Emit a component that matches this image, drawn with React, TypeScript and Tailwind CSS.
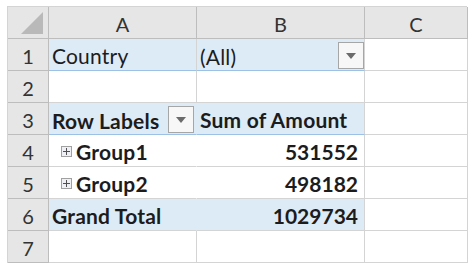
import React from 'react';

const font = { fontFamily: 'Lato, "Open Sans", sans-serif' };

const Dropdown: React.FC = () => (
  <div className="w-[26px] h-[27px] border border-[#a6a6a6] bg-[#f7f7f7] flex items-center justify-center shrink-0">
    <div className="w-0 h-0 border-l-[5px] border-r-[5px] border-t-[6px] border-l-transparent border-r-transparent border-t-[#6b6b6b]" />
  </div>
);

const Plus: React.FC = () => (
  <div className="w-[11px] h-[11px] border border-[#a0a0a0] bg-[#eef0f5] flex items-center justify-center mr-[4px] relative shrink-0">
    <div className="absolute w-[7px] h-px bg-[#505050]" />
    <div className="absolute w-px h-[7px] bg-[#505050]" />
  </div>
);

const cell = 'h-[32px] border-r border-b border-[#d4d4d4] flex items-center text-[21px] tracking-[0.2px] text-[#1c1c1c] pt-[2px]';
const num = 'text-[20px] tracking-normal';
const head = 'h-[32px] border-r border-b border-[#bdbdbd] bg-[#e6e6e6] flex items-center justify-center text-[20px] text-[#333] pt-[2px]';
const blue = 'bg-[#ddebf7]';

export default function App() {
  const rowHead = (n: number) => (
    <div className={`${head} text-[#222]`}>{n}</div>
  );

  return (
    <div className="w-[474px] h-[268px] bg-white pt-[6px] pl-[7px]" style={font}>
      <div className="grid grid-cols-[41px_148px_168px_103px] border-t border-l border-[#d4d4d4] w-[460px]">
        {/* header row */}
        <div className={`${head} items-end justify-end pr-[5px] pb-[4px] pt-0`}>
          <div className="w-[22px] h-[22px] bg-[#b9b9b9] [clip-path:polygon(100%_0,100%_100%,0_100%)]" />
        </div>
        <div className={head}>A</div>
        <div className={head}>B</div>
        <div className={head}>C</div>

        {/* row 1 */}
        {rowHead(1)}
        <div className={`${cell} ${blue} border-b-[#9bc2e6] pl-[3px]`}>Country</div>
        <div className={`${cell} ${blue} border-b-[#9bc2e6] pl-[3px] justify-between pr-0 pt-0`}>
          <span className="pt-[2px]">(All)</span>
          <Dropdown />
        </div>
        <div className={cell} />

        {/* row 2 */}
        {rowHead(2)}
        <div className={cell} />
        <div className={cell} />
        <div className={cell} />

        {/* row 3 */}
        {rowHead(3)}
        <div className={`${cell} ${blue} border-r-transparent border-b-[#9bc2e6] pl-[3px] pr-[2px] justify-between font-bold pt-0`}>
          <span className="pt-[2px]">Row Labels</span>
          <Dropdown />
        </div>
        <div className={`${cell} ${blue} border-b-[#9bc2e6] pl-[3px] font-bold`}>Sum of Amount</div>
        <div className={cell} />

        {/* row 4 */}
        {rowHead(4)}
        <div className={`${cell} border-r-transparent pl-[12px] font-bold`}>
          <Plus />
          <span>Group1</span>
        </div>
        <div className={`${cell} ${num} justify-end pr-[6px] font-bold`}>531552</div>
        <div className={cell} />

        {/* row 5 */}
        {rowHead(5)}
        <div className={`${cell} border-r-transparent pl-[12px] font-bold`}>
          <Plus />
          <span>Group2</span>
        </div>
        <div className={`${cell} ${num} justify-end pr-[6px] font-bold`}>498182</div>
        <div className={cell} />

        {/* row 6 */}
        {rowHead(6)}
        <div className={`${cell} ${blue} border-r-transparent pl-[3px] font-bold`}>Grand Total</div>
        <div className={`${cell} ${num} ${blue} justify-end pr-[6px] font-bold`}>1029734</div>
        <div className={cell} />

        {/* row 7 */}
        {rowHead(7)}
        <div className={cell} />
        <div className={cell} />
        <div className={cell} />
      </div>
    </div>
  );
}
